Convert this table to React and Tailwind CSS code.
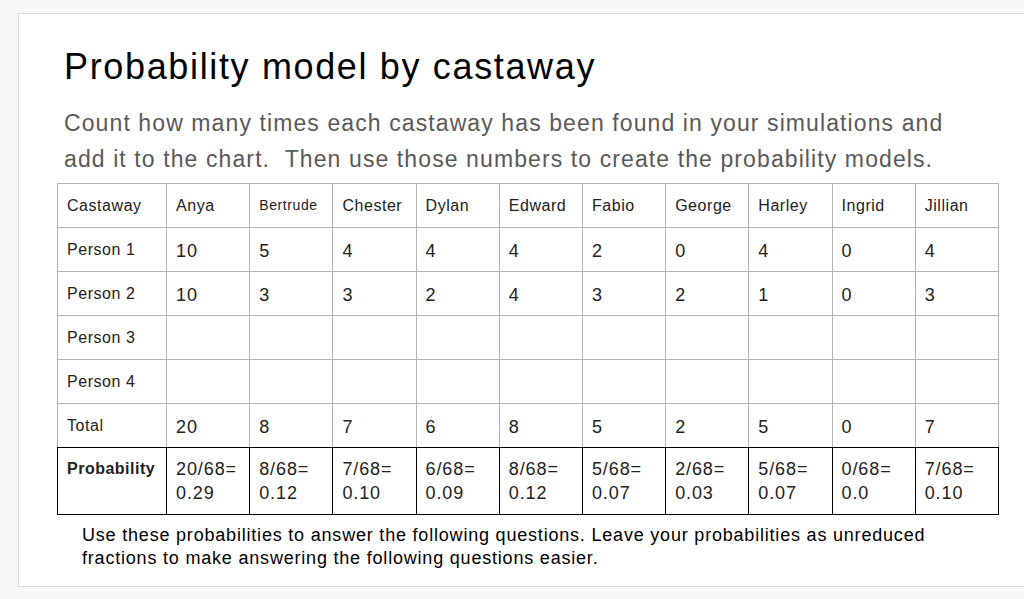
import React from "react";

const names = ["Anya", "Bertrude", "Chester", "Dylan", "Edward", "Fabio", "George", "Harley", "Ingrid", "Jillian"];
const rows = [
  ["Person 1", ["10", "5", "4", "4", "4", "2", "0", "4", "0", "4"]],
  ["Person 2", ["10", "3", "3", "2", "4", "3", "2", "1", "0", "3"]],
  ["Person 3", ["", "", "", "", "", "", "", "", "", ""]],
  ["Person 4", ["", "", "", "", "", "", "", "", "", ""]],
];
const totals = ["20", "8", "7", "6", "8", "5", "2", "5", "0", "7"];
const probs = [
  ["20/68=", "0.29"],
  ["8/68=", "0.12"],
  ["7/68=", "0.10"],
  ["6/68=", "0.09"],
  ["8/68=", "0.12"],
  ["5/68=", "0.07"],
  ["2/68=", "0.03"],
  ["5/68=", "0.07"],
  ["0/68=", "0.0"],
  ["7/68=", "0.10"],
];

export default function App() {
  return (
    <div
      className="h-[599px] w-[1024px] overflow-hidden bg-[#f8f7f5] pl-[18px] pt-[13px]"
      style={{ fontFamily: '"Liberation Sans", Arial, sans-serif' }}
    >
      <div className="h-[574px] w-[1020px] border border-[#dcdcdc] bg-white pl-[38px] pt-[33px]">
        <h1 className="pl-[7px] text-[36px] leading-[40px] tracking-[1.65px] text-black">Probability model by castaway</h1>
        <p className="mt-[18px] w-[900px] pl-[7px] text-[23px] leading-[36px] tracking-[1.1px] text-[#595959]">
          Count how many times each castaway has been found in your simulations and add it to the chart.&nbsp; Then use those numbers to create the probability models.
        </p>
        <table className="mt-[6px] w-[942px] table-fixed border-collapse text-[#222]">
          <colgroup>
            <col className="w-[109px]" />
            {names.map((n) => (
              <col key={n} />
            ))}
          </colgroup>
          <tbody>
            <tr className="h-[44px]">
              <td className="border border-[#b5b5b5] pl-[9px] text-[16px] tracking-[0.55px]">Castaway</td>
              {names.map((n) => (
                <td
                  key={n}
                  className={`border border-[#b5b5b5] pl-[9px] ${n === "Bertrude" ? "text-[14px] tracking-[0.6px]" : "text-[16px] tracking-[0.55px]"}`}
                >
                  {n}
                </td>
              ))}
            </tr>
            {rows.map(([label, vals]) => (
              <tr key={label} className="h-[44px]">
                <td className="border border-[#b5b5b5] pl-[9px] text-[16px] tracking-[0.55px]">{label}</td>
                {vals.map((v, i) => (
                  <td key={i} className="border border-[#b5b5b5] pl-[9px] pt-[3px] text-[18px] tracking-[0.9px]">
                    {v}
                  </td>
                ))}
              </tr>
            ))}
            <tr className="h-[44px]">
              <td className="border border-[#b5b5b5] border-b-black pl-[9px] text-[16px] tracking-[0.55px]">Total</td>
              {totals.map((v, i) => (
                <td key={i} className="border border-[#b5b5b5] border-b-black pl-[9px] pt-[3px] text-[18px] tracking-[0.9px]">
                  {v}
                </td>
              ))}
            </tr>
            <tr className="h-[67px]">
              <td className="border border-black pl-[9px] pt-[9px] align-top text-[16px] font-bold tracking-[0.5px]">Probability</td>
              {probs.map(([a, b], i) => (
                <td key={i} className="border border-black pl-[9px] pt-[9px] align-top text-[18px] leading-[24px] tracking-[0.9px]">
                  <div>{a}</div>
                  <div>{b}</div>
                </td>
              ))}
            </tr>
          </tbody>
        </table>
        <p className="ml-[25px] mt-[9px] w-[870px] text-[18px] leading-[23px] tracking-[0.8px] text-black">
          Use these probabilities to answer the following questions. Leave your probabilities as unreduced fractions to make answering the following questions easier.
        </p>
      </div>
    </div>
  );
}
